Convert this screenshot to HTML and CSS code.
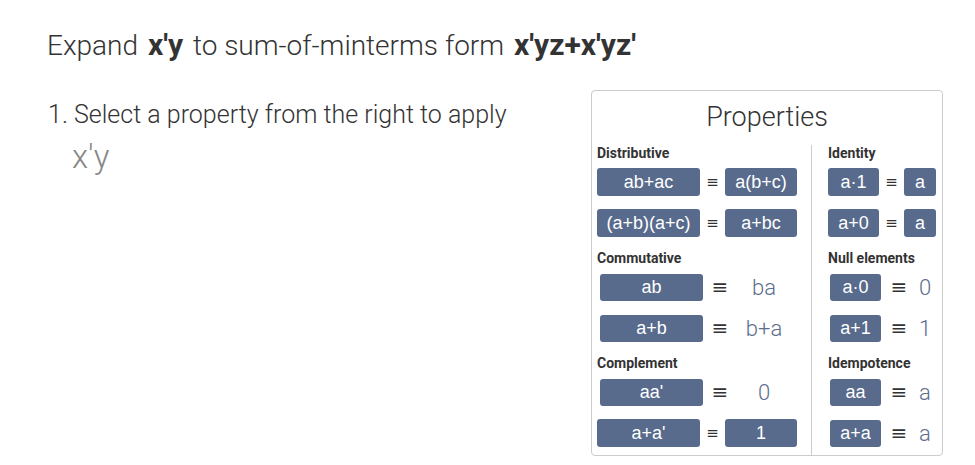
FILE: index.html
```html
<!DOCTYPE html>
<html>
<head>
<meta charset="utf-8">
<link rel="stylesheet" href="styles.css">
</head>
<body>
<div class="page">
  <h1 class="title">Expand <b>x'y</b> to sum-of-minterms form <b>x'yz+x'yz'</b></h1>
  <div class="main">
    <div class="work">
      <ol class="steps">
        <li>Select a property from the right to apply</li>
      </ol>
      <div class="expr">x'y</div>
    </div>
    <div class="panel">
      <div class="panel-title">Properties</div>
      <div class="cols">
        <div class="col left">
          <div class="section">
            <div class="label">Distributive</div>
            <div class="row bb"><span class="btn w103">ab+ac</span><span class="eq">≡</span><span class="btn w72">a(b+c)</span></div>
            <div class="row bb"><span class="btn w103">(a+b)(a+c)</span><span class="eq">≡</span><span class="btn w72">a+bc</span></div>
          </div>
          <div class="section">
            <div class="label">Commutative</div>
            <div class="row bt"><span class="btn w103">ab</span><span class="eq big">≡</span><span class="txt">ba</span></div>
            <div class="row bt"><span class="btn w103">a+b</span><span class="eq big">≡</span><span class="txt">b+a</span></div>
          </div>
          <div class="section">
            <div class="label">Complement</div>
            <div class="row bt"><span class="btn w103">aa'</span><span class="eq big">≡</span><span class="txt">0</span></div>
            <div class="row bb"><span class="btn w103">a+a'</span><span class="eq">≡</span><span class="btn w72">1</span></div>
          </div>
        </div>
        <div class="col right">
          <div class="section">
            <div class="label">Identity</div>
            <div class="row bb"><span class="btn w51">a·1</span><span class="eq">≡</span><span class="btn w32">a</span></div>
            <div class="row bb"><span class="btn w51">a+0</span><span class="eq">≡</span><span class="btn w32">a</span></div>
          </div>
          <div class="section">
            <div class="label">Null elements</div>
            <div class="row bt"><span class="btn w51">a·0</span><span class="eq big r">≡</span><span class="txt r">0</span></div>
            <div class="row bt"><span class="btn w51">a+1</span><span class="eq big r">≡</span><span class="txt r">1</span></div>
          </div>
          <div class="section">
            <div class="label">Idempotence</div>
            <div class="row bt"><span class="btn w51">aa</span><span class="eq big r">≡</span><span class="txt r">a</span></div>
            <div class="row bt"><span class="btn w51">a+a</span><span class="eq big r">≡</span><span class="txt r">a</span></div>
          </div>
        </div>
      </div>
    </div>
  </div>
</div>
</body>
</html>
```
FILE: styles.css
```css
html, body {
  margin: 0;
  padding: 0;
  background: #fff;
}
body {
  font-family: Roboto, "Liberation Sans", sans-serif;
  color: #333;
}
.page {
  padding: 27px 32px 0 47px;
}
.title {
  margin: 0;
  font-size: 28px;
  font-weight: 300;
  line-height: 36px;
  color: #333;
}
.title b {
  font-weight: 700;
  font-size: 30px;
  margin: 0 3px;
}
.main {
  display: flex;
  margin-top: 26px;
}
.work {
  flex: 1;
}
.steps {
  margin: 10px 0 0;
  padding: 0 0 0 27px;
  font-size: 25px;
  font-weight: 300;
  line-height: 30px;
  color: #333;
}
.expr {
  margin: 9px 0 0 25px;
  font-size: 33px;
  font-weight: 300;
  color: #888;
  line-height: 36px;
}
.panel {
  width: 350px;
  height: 364px;
  border: 1px solid #ccc;
  border-radius: 4px;
  box-sizing: content-box;
}
.panel-title {
  text-align: center;
  font-size: 27px;
  font-weight: 300;
  line-height: 34px;
  margin-top: 9px;
  color: #333;
}
.cols {
  display: flex;
  margin-top: 11px;
}
.col.left {
  width: 214px;
  padding-left: 5px;
  border-right: 1px solid #ccc;
  padding-bottom: 6px;
}
.col.right {
  padding-left: 16px;
}
.section {
  display: flex;
  flex-direction: column;
  gap: 13px;
  margin-bottom: 13px;
}
.label {
  font-size: 14px;
  font-weight: 700;
  line-height: 16px;
  margin-bottom: -6px;
  color: #333;
}
.row {
  display: flex;
  align-items: center;
  height: 28px;
}
.row.bt {
  padding-left: 3px;
}
.col.right .row.bt {
  padding-left: 2px;
}
.btn {
  display: flex;
  align-items: center;
  justify-content: center;
  height: 28px;
  background: #586b8c;
  color: #fff;
  border-radius: 3px;
  font-family: "Liberation Sans", Arial, sans-serif;
  font-size: 18px;
}
.row.bt .btn {
  height: 27px;
}
.w103 { width: 103px; }
.w72 { width: 72px; }
.w51 { width: 51px; }
.w32 { width: 32px; }
.eq {
  width: 25px;
  text-align: center;
  font-family: "DejaVu Sans", sans-serif;
  font-size: 15px;
  color: #333;
}
.eq.big {
  width: 34px;
  font-size: 20px;
}
.eq.big.r {
  width: 36px;
}
.txt {
  width: 54px;
  text-align: center;
  font-size: 22px;
  font-weight: 300;
  color: #5d6e8c;
}
.txt.r {
  width: 16px;
}
```
